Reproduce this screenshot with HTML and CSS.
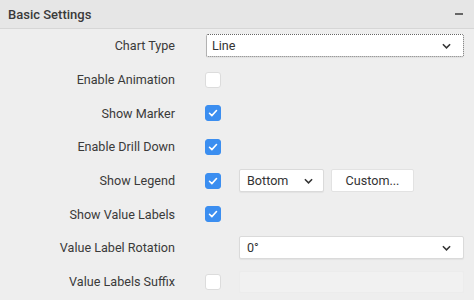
FILE: index.html
```html
<!DOCTYPE html>
<html lang="en">
<head>
  <meta charset="UTF-8">
  <meta name="viewport" content="width=device-width, initial-scale=1.0">
  <title>Basic Settings</title>
  <link rel="stylesheet" href="styles.css">
</head>
<body>
  <div class="panel">
    <div class="panel-header">
      <span class="panel-title">Basic Settings</span>
      <span class="collapse"></span>
    </div>

    <div class="panel-body">
      <div class="row">
        <label class="label">Chart Type</label>
        <div class="control">
          <div class="select select-focus wide">
            <span>Line</span>
            <svg class="chevron" viewBox="0 0 10 6"><path d="M1 1l4 4 4-4" /></svg>
          </div>
        </div>
      </div>

      <div class="row">
        <label class="label">Enable Animation</label>
        <div class="control"><span class="check"></span></div>
      </div>

      <div class="row">
        <label class="label">Show Marker</label>
        <div class="control"><span class="check checked"><svg viewBox="0 0 16 16"><path d="M4 8.3l2.7 2.7L12 5.2" /></svg></span></div>
      </div>

      <div class="row">
        <label class="label">Enable Drill Down</label>
        <div class="control"><span class="check checked"><svg viewBox="0 0 16 16"><path d="M4 8.3l2.7 2.7L12 5.2" /></svg></span></div>
      </div>

      <div class="row">
        <label class="label">Show Legend</label>
        <div class="control">
          <span class="check checked"><svg viewBox="0 0 16 16"><path d="M4 8.3l2.7 2.7L12 5.2" /></svg></span>
          <div class="select legend-pos">
            <span>Bottom</span>
            <svg class="chevron" viewBox="0 0 10 6"><path d="M1 1l4 4 4-4" /></svg>
          </div>
          <button class="btn">Custom...</button>
        </div>
      </div>

      <div class="row">
        <label class="label">Show Value Labels</label>
        <div class="control"><span class="check checked"><svg viewBox="0 0 16 16"><path d="M4 8.3l2.7 2.7L12 5.2" /></svg></span></div>
      </div>

      <div class="row">
        <label class="label">Value Label Rotation</label>
        <div class="control indent">
          <div class="select wide">
            <span>0°</span>
            <svg class="chevron" viewBox="0 0 10 6"><path d="M1 1l4 4 4-4" /></svg>
          </div>
        </div>
      </div>

      <div class="row">
        <label class="label">Value Labels Suffix</label>
        <div class="control">
          <span class="check"></span>
          <input class="text-input" type="text" disabled>
        </div>
      </div>
    </div>
  </div>
</body>
</html>
```

FILE: styles.css
```css
body {
  margin: 0;
  font-family: Roboto, "Liberation Sans", sans-serif;
  font-size: 12.6px;
  color: #333;
  background: #eeeeee;
}

.panel {
  width: 474px;
  height: 300px;
  overflow: hidden;
  background: #eeeeee;
}

.panel-header {
  height: 28px;
  display: flex;
  align-items: center;
  justify-content: space-between;
  padding: 0 11px 0 8px;
  background: #e6e6e6;
  border-bottom: 1px solid #d6d6d6;
}

.panel-title {
  font-size: 13px;
  font-weight: 500;
  color: #3a3a3a;
}

.collapse {
  width: 8px;
  height: 2px;
  background: #666;
}

.row {
  height: 33.7px;
  display: flex;
  align-items: center;
}

.label {
  width: 175px;
  text-align: right;
  color: #3a3a3a;
}

.control {
  margin-left: 30px;
  flex: 1;
  display: flex;
  align-items: center;
  padding-right: 10px;
}

.control.indent {
  padding-left: 34px;
}

.check {
  width: 16px;
  height: 16px;
  box-sizing: border-box;
  border: 1px solid #dcdcdc;
  border-radius: 3px;
  background: #fff;
  display: flex;
  align-items: center;
  justify-content: center;
  flex-shrink: 0;
}

.check.checked {
  background: #3b8ef0;
  border-color: #3b8ef0;
}

.check svg {
  width: 16px;
  height: 16px;
  fill: none;
  stroke: #fff;
  stroke-width: 1.8;
  stroke-linecap: round;
  stroke-linejoin: round;
}

.select {
  height: 23px;
  box-sizing: border-box;
  background: #fff;
  border: 1px solid #dadada;
  border-radius: 2px;
  display: flex;
  align-items: center;
  justify-content: space-between;
  padding: 0 12px 0 7px;
  font-size: 12.6px;
  color: #333;
  box-shadow: 0 1px 1px rgba(0, 0, 0, 0.05);
}

.select.wide {
  flex: 1;
}

.select-focus {
  margin-left: 1px;
  border: 1px dotted #666;
  padding-left: 5px;
}

.chevron {
  width: 9px;
  height: 6px;
  fill: none;
  stroke: #333;
  stroke-width: 1.7;
}

.legend-pos {
  width: 85px;
  margin-left: 18px;
  padding-right: 10px;
}

.btn {
  width: 83px;
  height: 23px;
  margin-left: 7px;
  background: #fff;
  border: 1px solid #e2e2e2;
  border-radius: 2px;
  font-family: Roboto, "Liberation Sans", sans-serif;
  font-size: 12.6px;
  color: #333;
  padding: 0;
}

.text-input {
  flex: 1;
  height: 22px;
  margin-left: 18px;
  box-sizing: border-box;
  border: 1px solid #ececec;
  background: #f1f1f1;
  border-radius: 2px;
}
```
